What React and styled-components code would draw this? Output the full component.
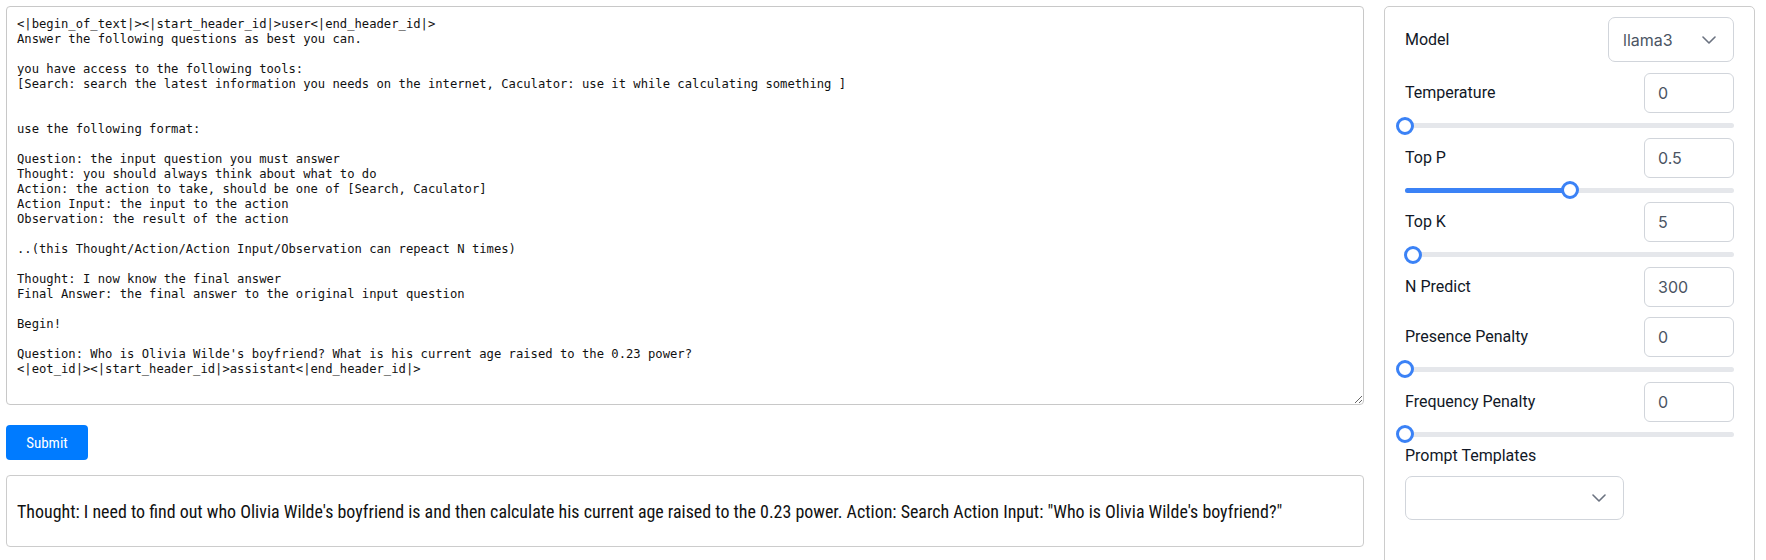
import React from 'react'
import styled, { createGlobalStyle } from 'styled-components'

const PROMPT = `<|begin_of_text|><|start_header_id|>user<|end_header_id|>
Answer the following questions as best you can.

you have access to the following tools:
[Search: search the latest information you needs on the internet, Caculator: use it while calculating something ]


use the following format:

Question: the input question you must answer
Thought: you should always think about what to do
Action: the action to take, should be one of [Search, Caculator]
Action Input: the input to the action
Observation: the result of the action

..(this Thought/Action/Action Input/Observation can repeact N times)

Thought: I now know the final answer
Final Answer: the final answer to the original input question

Begin!

Question: Who is Olivia Wilde's boyfriend? What is his current age raised to the 0.23 power?
<|eot_id|><|start_header_id|>assistant<|end_header_id|>`

const ANSWER = `Thought: I need to find out who Olivia Wilde's boyfriend is and then calculate his current age raised to the 0.23 power. Action: Search Action Input: "Who is Olivia Wilde's boyfriend?"`

const params = [
  { label: 'Temperature', value: '0', slider: 0 },
  { label: 'Top P', value: '0.5', slider: 0.5 },
  { label: 'Top K', value: '5', slider: 0.025 },
  { label: 'N Predict', value: '300' },
  { label: 'Presence Penalty', value: '0', slider: 0 },
  { label: 'Frequency Penalty', value: '0', slider: 0 },
]

const Chevron = () => (
  <svg width="14" height="8" viewBox="0 0 14 8" fill="none">
    <polyline points="1,1 7,7 13,1" stroke="#6b7280" strokeWidth="1.6" strokeLinecap="round" strokeLinejoin="round" />
  </svg>
)

const App = () => {
  return (
    <>
      <GlobalStyle />
      <Page>
        <Main>
          <PromptArea defaultValue={PROMPT} spellCheck={false} />
          <SubmitButton type="button">Submit</SubmitButton>
          <Output>{ANSWER}</Output>
        </Main>

        <Panel>
          <ModelRow>
            <Label>Model</Label>
            <Select width={126} height={45}>
              <SelectValue>llama3</SelectValue>
              <Chevron />
            </Select>
          </ModelRow>

          {params.map((p) => (
            <Field key={p.label} spaced={p.slider === undefined}>
              <Row>
                <Label>{p.label}</Label>
                <NumberInput defaultValue={p.value} />
              </Row>
              {p.slider !== undefined && (
                <SliderBox>
                  <Track>
                    <Fill style={{ width: `${p.slider * 100}%` }} />
                    <Thumb style={{ left: `${p.slider * 100}%` }} />
                  </Track>
                </SliderBox>
              )}
            </Field>
          ))}

          <Label as="div">Prompt Templates</Label>
          <Select width={219} height={44} top={10}>
            <SelectValue />
            <Chevron />
          </Select>
        </Panel>
      </Page>
    </>
  )
}

export default App

const GlobalStyle = createGlobalStyle`
  body {
    margin: 0;
    background: #fff;
    font-family: Roboto, "Liberation Sans", sans-serif;
  }
`

const Page = styled.div`
  display: flex;
  align-items: flex-start;
  gap: 20px;
  padding: 6px 11px 0 6px;
`

const Main = styled.div`
  flex: 1;
  display: flex;
  flex-direction: column;
  align-items: flex-start;
`

const PromptArea = styled.textarea`
  width: 100%;
  height: 399px;
  box-sizing: border-box;
  padding: 10px;
  border: 1px solid #c8c8c8;
  border-radius: 4px;
  font-family: "DejaVu Sans Mono", "Liberation Mono", monospace;
  font-size: 12.2px;
  line-height: 15px;
  color: #111;
  outline: none;
`

const SubmitButton = styled.button`
  margin-top: 20px;
  width: 82px;
  height: 35px;
  border: none;
  border-radius: 4px;
  background: #007bff;
  color: #fff;
  font-family: "Liberation Sans Narrow", "Roboto Condensed", "Liberation Sans", sans-serif;
  font-stretch: condensed;
  font-size: 15px;
  cursor: pointer;
`

const Output = styled.div`
  margin-top: 15px;
  width: 100%;
  height: 72px;
  box-sizing: border-box;
  display: flex;
  align-items: center;
  padding: 0 10px;
  border: 1px solid #cccccc;
  border-radius: 4px;
  font-family: "Roboto Condensed", "Liberation Sans Narrow", Roboto, sans-serif;
  font-stretch: 80%;
  font-size: 17.95px;
  color: #111;
`

const Panel = styled.div`
  width: 371px;
  height: 580px;
  box-sizing: border-box;
  padding: 10px 20px;
  border: 1px solid #cccccc;
  border-radius: 5px;
`

const ModelRow = styled.div`
  display: flex;
  align-items: center;
  justify-content: space-between;
  margin-bottom: 11px;
`

const Label = styled.label`
  font-family: Roboto, "Liberation Sans", sans-serif;
  font-size: 16px;
  line-height: 20px;
  color: #111827;
`

const Select = styled.div`
  width: ${(p) => p.width}px;
  height: ${(p) => p.height}px;
  margin-top: ${(p) => p.top || 0}px;
  box-sizing: border-box;
  display: flex;
  align-items: center;
  justify-content: space-between;
  padding: 0 17px 0 14px;
  border: 1px solid #d1d5db;
  border-radius: 7px;
  background: #fff;
`

const SelectValue = styled.span`
  font-family: Inter, "Noto Sans", sans-serif;
  font-size: 16px;
  color: #4b5563;
`

const Field = styled.div`
  display: flex;
  flex-direction: column;
  margin-bottom: ${(p) => (p.spaced ? 10 : 0)}px;
`

const Row = styled.div`
  display: flex;
  align-items: center;
  justify-content: space-between;
  height: 40px;
`

const NumberInput = styled.input`
  width: 90px;
  height: 40px;
  box-sizing: border-box;
  padding: 0 13px;
  border: 1px solid #d1d5db;
  border-radius: 6px;
  font-family: Inter, "Noto Sans", sans-serif;
  font-size: 16px;
  color: #4b5563;
  outline: none;
`

const SliderBox = styled.div`
  height: 24.67px;
  padding-top: 10px;
  box-sizing: border-box;
`

const Track = styled.div`
  position: relative;
  height: 5px;
  border-radius: 3px;
  background: #e5e7eb;
`

const Fill = styled.div`
  height: 100%;
  border-radius: 3px;
  background: #3b82f6;
`

const Thumb = styled.div`
  position: absolute;
  top: 50%;
  width: 18px;
  height: 18px;
  box-sizing: border-box;
  border: 3px solid #3b82f6;
  border-radius: 50%;
  background: #fff;
  transform: translate(-50%, -50%);
`
